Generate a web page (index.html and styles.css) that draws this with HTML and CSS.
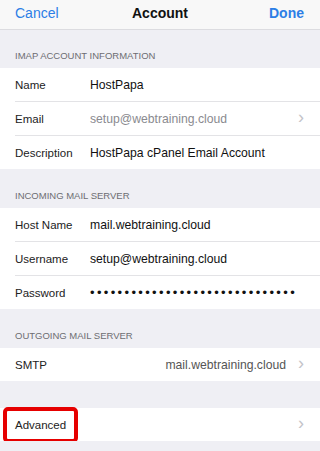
FILE: index.html
```
<!DOCTYPE html>
<html lang="en">
<head>
    <meta charset="UTF-8">
    <meta name="viewport" content="width=device-width, initial-scale=1.0">
    <title>Account</title>
    <link rel="stylesheet" href="styles.css">
</head>
<body>
    <div class="navbar">
        <span class="nav-btn">Cancel</span>
        <span class="nav-title">Account</span>
        <span class="nav-btn done">Done</span>
    </div>

    <div class="section-header first">IMAP ACCOUNT INFORMATION</div>
    <div class="group">
        <div class="row"><span class="label">Name</span><span class="value">HostPapa</span></div>
        <div class="row"><span class="label">Email</span><span class="value muted">setup@webtraining.cloud</span><span class="chevron">&#x203A;</span></div>
        <div class="row"><span class="label">Description</span><span class="value">HostPapa cPanel Email Account</span></div>
    </div>

    <div class="section-header">INCOMING MAIL SERVER</div>
    <div class="group">
        <div class="row"><span class="label">Host Name</span><span class="value">mail.webtraining.cloud</span></div>
        <div class="row"><span class="label">Username</span><span class="value">setup@webtraining.cloud</span></div>
        <div class="row"><span class="label">Password</span><span class="value dots">&#x2022;&#x2022;&#x2022;&#x2022;&#x2022;&#x2022;&#x2022;&#x2022;&#x2022;&#x2022;&#x2022;&#x2022;&#x2022;&#x2022;&#x2022;&#x2022;&#x2022;&#x2022;&#x2022;&#x2022;&#x2022;&#x2022;&#x2022;&#x2022;&#x2022;&#x2022;&#x2022;&#x2022;&#x2022;&#x2022;</span></div>
    </div>

    <div class="section-header">OUTGOING MAIL SERVER</div>
    <div class="group">
        <div class="row"><span class="label">SMTP</span><span class="value right">mail.webtraining.cloud</span><span class="chevron">&#x203A;</span></div>
    </div>

    <div class="spacer"></div>
    <div class="group">
        <div class="row">
            <span class="label highlight">Advanced</span>
            <span class="value"></span>
            <span class="chevron">&#x203A;</span>
        </div>
    </div>
</body>
</html>
```

FILE: styles.css
```
body {
    margin: 0;
    background-color: #efeff4;
    font-family: "Liberation Sans", Arial, sans-serif;
    color: #111;
}
.navbar {
    height: 25px;
    background-color: #f8f8f8;
    border-bottom: 1px solid #dcdce0;
    display: flex;
    align-items: center;
    justify-content: space-between;
    padding: 0 16px 4px 15px;
    box-sizing: content-box;
    position: relative;
}
.nav-btn {
    color: #2c7ee6;
    font-size: 14px;
}
.nav-btn.done {
    font-weight: bold;
}
.nav-title {
    font-size: 14px;
    font-weight: bold;
    color: #111;
    position: absolute;
    left: 0;
    right: 0;
    text-align: center;
    pointer-events: none;
}
.section-header {
    font-size: 9.5px;
    color: #6d6d72;
    padding: 22px 15px 7px;
    height: 10px;
    line-height: 10px;
}
.section-header.first {
    padding-top: 21px;
}
.group {
    background-color: #fff;
}
.row {
    display: flex;
    align-items: center;
    height: 33px;
    margin-left: 15px;
    padding-right: 16px;
    border-bottom: 1px solid #e3e3e6;
}
.row:last-child {
    border-bottom: none;
}
.label {
    width: 75px;
    font-size: 11.5px;
    color: #222;
    flex-shrink: 0;
}
.value {
    flex: 1;
    font-size: 12.2px;
    color: #111;
    white-space: nowrap;
}
.value.muted {
    color: #8a8a8f;
}
.value.right {
    text-align: right;
    color: #555;
    padding-right: 12px;
}
.value.dots {
    font-size: 13px;
    letter-spacing: 2.35px;
}
.chevron {
    color: #c4c4c9;
    font-size: 18px;
    line-height: 1;
    margin-top: -3px;
}
.spacer {
    height: 27px;
}
.highlight {
    position: relative;
}
.highlight::before {
    content: "";
    position: absolute;
    left: -12px;
    top: -12px;
    width: 67px;
    height: 28px;
    border: 4px solid #e60000;
    border-radius: 5px;
}
```
